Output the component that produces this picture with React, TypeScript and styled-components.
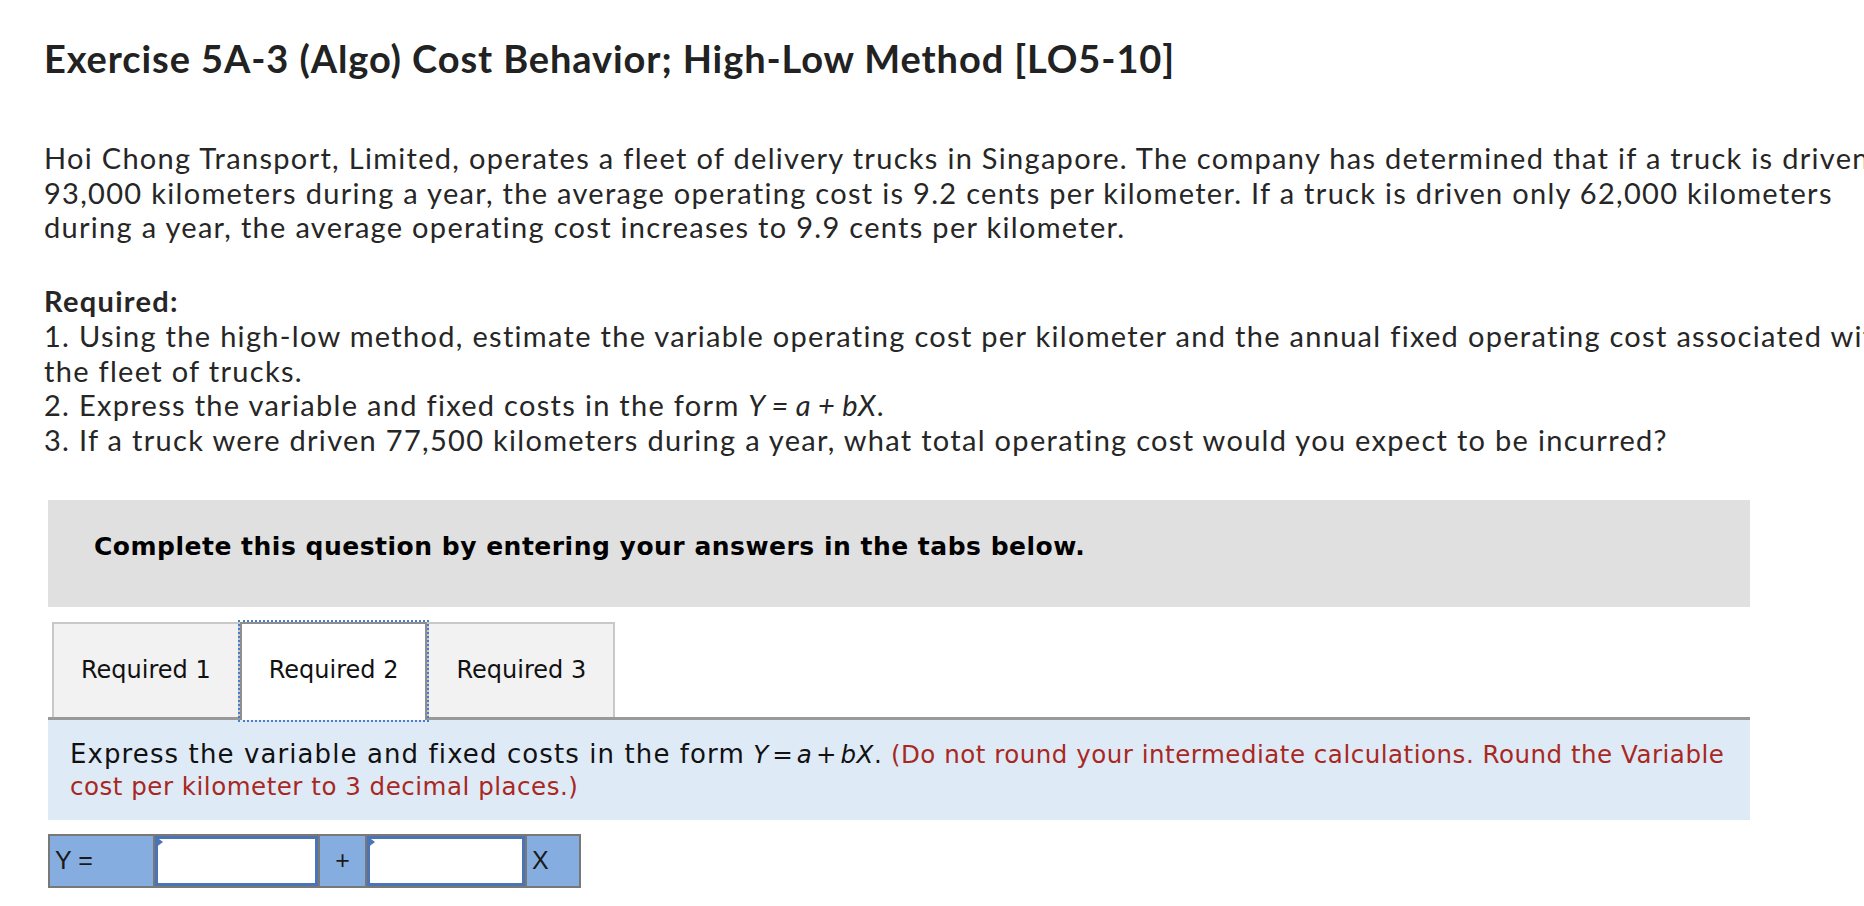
import React from "react";
import styled, { createGlobalStyle } from "styled-components";

const GlobalStyle = createGlobalStyle`
  html, body {
    margin: 0;
    padding: 0;
    background: #ffffff;
    overflow: hidden;
  }
`;

const Page = styled.div`
  padding: 36px 0 0 44px;
  font-family: Lato, "Open Sans", sans-serif;
  color: #262626;
`;

const Title = styled.h1`
  margin: 0;
  font-family: Lato, "Open Sans", sans-serif;
  font-weight: 700;
  font-size: 38px;
  letter-spacing: 0.9px;
  line-height: 44px;
  color: #222222;
  white-space: nowrap;
`;

const TextBlock = styled.div<{ $gap: number }>`
  margin-top: ${(p) => p.$gap}px;
  font-size: 29px;
  letter-spacing: 1.3px;
  line-height: 34.7px;
  white-space: nowrap;
`;

const Line = styled.div``;

const Strong = styled.div`
  font-weight: 700;
`;

const Formula = styled.i`
  font-style: italic;
  word-spacing: -2px;
`;

const Question = styled.section`
  margin: 42px 0 0 4px;
  width: 1702px;
`;

const Banner = styled.div`
  height: 107px;
  box-sizing: border-box;
  background: #e0e0e0;
  display: flex;
  align-items: center;
  padding: 0 0 14px 46px;
  font-family: "DejaVu Sans", Verdana, sans-serif;
  font-weight: 700;
  font-size: 25px;
  letter-spacing: 0.5px;
  color: #000000;
`;

const TabRow = styled.div`
  display: flex;
  margin: 15px 0 0 4px;
  position: relative;
  z-index: 1;
`;

const Tab = styled.div<{ $active?: boolean }>`
  height: 98px;
  box-sizing: border-box;
  display: flex;
  align-items: center;
  padding: 0 27px 3px;
  margin-bottom: -3px;
  font-family: "DejaVu Sans", Verdana, sans-serif;
  font-size: 24px;
  color: #111111;
  background: ${(p) => (p.$active ? "#ffffff" : "#f2f2f2")};
  border: 2px solid ${(p) => (p.$active ? "#8e8e8e" : "#c8c8c8")};
  border-bottom: none;
  ${(p) =>
    p.$active
      ? `outline: 2px dotted #4a7cc7; outline-offset: 0; position: relative; z-index: 2;`
      : `height: 95px; margin-bottom: 0; padding-bottom: 0;`}
`;

const Panel = styled.div`
  border-top: 3px solid #999999;
  background: #dfeaf7;
  padding: 18px 6px 17px 22px;
  font-family: "DejaVu Sans", Verdana, sans-serif;
  font-size: 24.5px;
  letter-spacing: 0.62px;
  line-height: 32px;
  color: #111111;
`;

const Lead = styled.span`
  font-size: 26px;
  letter-spacing: 1.1px;
`;

const PanelFormula = styled.span`
  word-spacing: -5px;

  i {
    font-style: italic;
  }
`;

const Hint = styled.span`
  color: #a8281f;
  letter-spacing: 0.52px;
`;

const EqRow = styled.div`
  margin-top: 14px;
  display: flex;
  width: fit-content;
  gap: 2px;
  border: 2px solid #787878;
  background: #787878;
  height: 54px;
  box-sizing: border-box;
`;

const EqCell = styled.div<{ $w: number; $center?: boolean }>`
  width: ${(p) => p.$w}px;
  background: #86ade0;
  display: flex;
  align-items: center;
  justify-content: ${(p) => (p.$center ? "center" : "flex-start")};
  padding-left: ${(p) => (p.$center ? 0 : 5)}px;
  box-sizing: border-box;
  font-family: "Liberation Sans", Arial, sans-serif;
  font-size: 25px;
  color: #1a1a1a;
`;

const InputCell = styled.div<{ $w: number }>`
  width: ${(p) => p.$w}px;
  position: relative;
  background: #ffffff;
  border: 3px solid #4a74b6;
  box-sizing: border-box;
`;

const Flag = styled.span`
  position: absolute;
  left: -3px;
  top: -3px;
  width: 0;
  height: 0;
  border-top: 6px solid transparent;
  border-bottom: 6px solid transparent;
  border-left: 8px solid #4a74b6;
`;

export default function App() {
  return (
    <>
      <GlobalStyle />
      <Page>
        <Title>Exercise 5A-3 (Algo) Cost Behavior; High-Low Method [LO5-10]</Title>
        <TextBlock $gap={61}>
          <Line>
            Hoi Chong Transport, Limited, operates a fleet of delivery trucks in Singapore. The company has determined that if a truck is driven
          </Line>
          <Line>
            93,000 kilometers during a year, the average operating cost is 9.2 cents per kilometer. If a truck is driven only 62,000 kilometers
          </Line>
          <Line>during a year, the average operating cost increases to 9.9 cents per kilometer.</Line>
        </TextBlock>
        <TextBlock $gap={39}>
          <Strong>Required:</Strong>
          <Line>
            1. Using the high-low method, estimate the variable operating cost per kilometer and the annual fixed operating cost associated with
          </Line>
          <Line>the fleet of trucks.</Line>
          <Line>
            2. Express the variable and fixed costs in the form <Formula>Y = a + bX</Formula>.
          </Line>
          <Line>
            3. If a truck were driven 77,500 kilometers during a year, what total operating cost would you expect to be incurred?
          </Line>
        </TextBlock>
        <Question>
          <Banner>Complete this question by entering your answers in the tabs below.</Banner>
          <TabRow>
            <Tab>Required 1</Tab>
            <Tab $active>Required 2</Tab>
            <Tab>Required 3</Tab>
          </TabRow>
          <Panel>
            <Lead>Express the variable and fixed costs in the form</Lead>{" "}
            <PanelFormula>
              <i>Y</i> = <i>a</i> + <i>bX</i>.
            </PanelFormula>{" "}
            <Hint>
              (Do not round your intermediate calculations. Round the Variable cost per kilometer to 3 decimal places.)
            </Hint>
          </Panel>
          <EqRow>
            <EqCell $w={103}>Y =</EqCell>
            <InputCell $w={163}>
              <Flag />
            </InputCell>
            <EqCell $w={45} $center>
              +
            </EqCell>
            <InputCell $w={158}>
              <Flag />
            </InputCell>
            <EqCell $w={52}>X</EqCell>
          </EqRow>
        </Question>
      </Page>
    </>
  );
}
